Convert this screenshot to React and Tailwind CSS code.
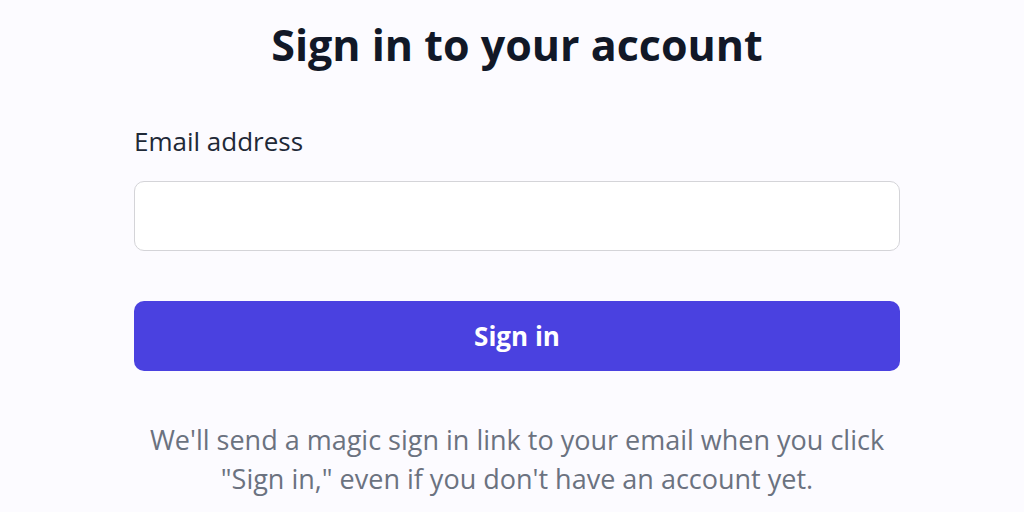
import React from "react";

export default function App() {
  return (
    <div className="min-h-screen w-full bg-[#fcfbff] flex pl-[134px]" style={{ fontFamily: '"Open Sans", "Noto Sans", sans-serif' }}>
      <div className="w-[766px] pt-[19px] flex flex-col">
        <h1 className="text-center text-[43px] leading-[52px] font-bold text-[#111827]">
          Sign in to your account
        </h1>
        <label className="mt-[53px] block text-[26px] leading-[34px] font-medium text-[#1f2937]">
          Email address
        </label>
        <input
          type="email"
          className="mt-[23px] h-[70px] w-full rounded-[10px] border border-[#d4d4d8] bg-white px-4 outline-none"
        />
        <button className="mt-[50px] h-[70px] w-full rounded-[10px] bg-[#4a41e0] text-white text-[26px] font-bold">
          Sign in
        </button>
        <p className="mt-[49px] text-center text-[27px] leading-[39px] text-[#6b7280]">
          We'll send a magic sign in link to your email when you click
          <br />
          "Sign in," even if you don't have an account yet.
        </p>
      </div>
    </div>
  );
}
